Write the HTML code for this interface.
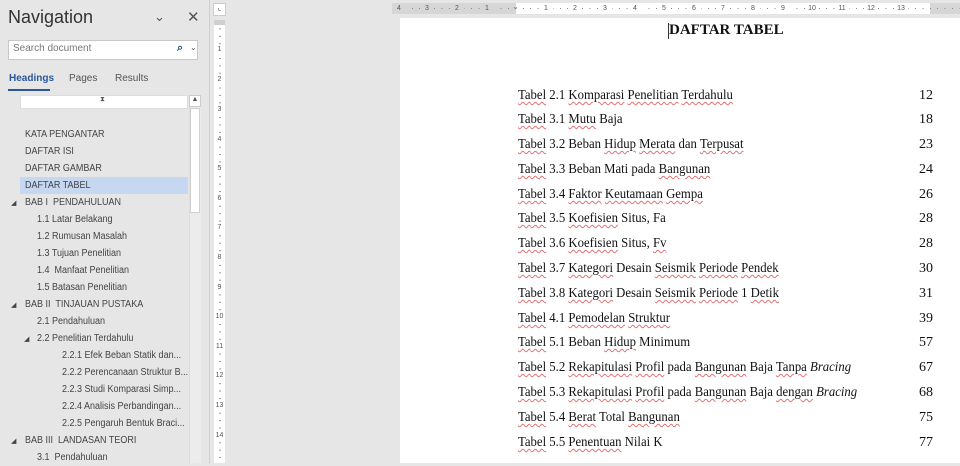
<!DOCTYPE html>
<html><head><meta charset="utf-8"><style>
*{margin:0;padding:0;box-sizing:border-box}
body{width:960px;height:463px;overflow:hidden;background:#e6e6e6;font-family:"Liberation Sans",sans-serif;position:relative}
.a{position:absolute}
.ni{position:absolute;font-size:10px;color:#444;white-space:nowrap;line-height:17px;transform:scaleX(0.9);transform-origin:left center}
.tri{position:absolute;font-size:7px;color:#444}
.row{position:absolute;left:518px;font-family:"Liberation Serif",serif;font-size:14px;color:#111;white-space:nowrap;line-height:18px;transform:scaleX(0.91);transform-origin:left center}
.pg{position:absolute;left:904px;width:29px;text-align:right;font-family:"Liberation Serif",serif;font-size:14px;color:#111;line-height:18px}
u{text-decoration:underline wavy #e07070;text-decoration-thickness:1px;text-underline-offset:2px}
.rn{position:absolute;top:3px;font-size:7px;color:#555;line-height:11px;width:14px;margin-left:-7px;text-align:center}
.vn{position:absolute;left:214px;width:11px;font-size:7px;color:#555;text-align:center;line-height:10px;margin-top:-5px}
</style></head><body>
<div class="a" style="left:8px;top:7px;font-size:18px;color:#333">Navigation</div>
<div class="a" style="left:154px;top:9px;font-size:13px;color:#555">&#8964;</div>
<div class="a" style="left:187px;top:8px;font-size:15px;color:#555">✕</div>
<div class="a" style="left:8px;top:40px;width:190px;height:20px;background:#fff;border:1px solid #c8c8c8"></div>
<div class="a" style="left:13px;top:43px;font-size:10px;color:#777">Search document</div>
<div class="a" style="left:177px;top:42px;font-size:11px;color:#2b4f8c;font-weight:bold">⌕</div>
<div class="a" style="left:190px;top:43px;font-size:8px;color:#555">⌄</div>
<div class="a" style="left:9px;top:73px;font-size:10px;color:#2b579a;font-weight:bold">Headings</div>
<div class="a" style="left:8px;top:89px;width:42px;height:2px;background:#2b579a"></div>
<div class="a" style="left:69px;top:73px;font-size:10px;color:#555">Pages</div>
<div class="a" style="left:115px;top:73px;font-size:10px;color:#555">Results</div>
<div class="a" style="left:20px;top:95px;width:168px;height:14px;background:#fff;border:1px solid #ddd"></div>
<div class="a" style="left:100px;top:96px;font-size:7px;color:#555">⧗</div>
<div class="a" style="left:189px;top:95px;width:12px;height:368px;background:#ececec;border-left:1px solid #ddd"></div>
<div class="a" style="left:189px;top:95px;width:12px;height:12px;background:#fff;border:1px solid #ccc;font-size:7px;text-align:center;color:#555">▲</div>
<div class="a" style="left:190px;top:108px;width:10px;height:105px;background:#fff;border:1px solid #d0d0d0"></div>
<div class="a" style="left:20px;top:177px;width:168px;height:17px;background:#c5d7f1"></div>
<div class="ni" style="left:25px;top:126px">KATA PENGANTAR</div>
<div class="ni" style="left:25px;top:143px">DAFTAR ISI</div>
<div class="ni" style="left:25px;top:160px">DAFTAR GAMBAR</div>
<div class="ni" style="left:25px;top:177px">DAFTAR TABEL</div>
<div class="tri" style="left:11px;top:199px">◢</div><div class="ni" style="left:25px;top:194px">BAB I&nbsp; PENDAHULUAN</div>
<div class="ni" style="left:37px;top:211px">1.1 Latar Belakang</div>
<div class="ni" style="left:37px;top:228px">1.2 Rumusan Masalah</div>
<div class="ni" style="left:37px;top:245px">1.3 Tujuan Penelitian</div>
<div class="ni" style="left:37px;top:262px">1.4&nbsp; Manfaat Penelitian</div>
<div class="ni" style="left:37px;top:279px">1.5 Batasan Penelitian</div>
<div class="tri" style="left:11px;top:301px">◢</div><div class="ni" style="left:25px;top:296px">BAB II&nbsp; TINJAUAN PUSTAKA</div>
<div class="ni" style="left:37px;top:313px">2.1 Pendahuluan</div>
<div class="tri" style="left:24px;top:335px">◢</div><div class="ni" style="left:37px;top:330px">2.2 Penelitian Terdahulu</div>
<div class="ni" style="left:62px;top:347px">2.2.1 Efek Beban Statik dan...</div>
<div class="ni" style="left:62px;top:364px">2.2.2 Perencanaan Struktur B...</div>
<div class="ni" style="left:62px;top:381px">2.2.3 Studi Komparasi Simp...</div>
<div class="ni" style="left:62px;top:398px">2.2.4 Analisis Perbandingan...</div>
<div class="ni" style="left:62px;top:415px">2.2.5 Pengaruh Bentuk Braci...</div>
<div class="tri" style="left:11px;top:437px">◢</div><div class="ni" style="left:25px;top:432px">BAB III&nbsp; LANDASAN TEORI</div>
<div class="ni" style="left:37px;top:449px">3.1&nbsp; Pendahuluan</div>
<div class="a" style="left:209px;top:0;width:1px;height:463px;background:#cfcfcf"></div>
<div class="a" style="left:213px;top:3px;width:13px;height:13px;background:#fff;border:1px solid #ccc;font-size:7px;text-align:center;color:#333">⌞</div>
<div class="a" style="left:214px;top:20px;width:11px;height:443px;background:#fff repeating-linear-gradient(to bottom,transparent 0 6.4px,#999 6.4px 7.4px,transparent 7.4px 7.4px) ;background-size:2px 7.4px;background-repeat:repeat-y;background-position:5px 2px"></div>
<div class="a" style="left:214px;top:20px;width:11px;height:5px;background:#cfcfcf"></div>
<div class="vn" style="top:50px;background:#fff">1</div><div class="vn" style="top:80px;background:#fff">2</div><div class="vn" style="top:110px;background:#fff">3</div><div class="vn" style="top:140px;background:#fff">4</div><div class="vn" style="top:169px;background:#fff">5</div><div class="vn" style="top:199px;background:#fff">6</div><div class="vn" style="top:228px;background:#fff">7</div><div class="vn" style="top:258px;background:#fff">8</div><div class="vn" style="top:288px;background:#fff">9</div><div class="vn" style="top:317px;background:#fff">10</div><div class="vn" style="top:347px;background:#fff">11</div><div class="vn" style="top:376px;background:#fff">12</div><div class="vn" style="top:406px;background:#fff">13</div><div class="vn" style="top:436px;background:#fff">14</div>
<div class="a" style="left:397px;top:3px;width:563px;height:11px;background:#fff"></div>
<div class="a" style="left:397px;top:3px;width:119px;height:11px;background:#d6d6d6"></div>
<div class="a" style="left:930px;top:3px;width:30px;height:11px;background:#d6d6d6"></div>
<div class="a" style="left:397px;top:8px;width:563px;height:1px;background:repeating-linear-gradient(to right,#888 0 1px,transparent 1px 7.4px)"></div>
<div class="rn" style="left:399px;background:#d6d6d6">4</div><div class="rn" style="left:427px;background:#d6d6d6">3</div><div class="rn" style="left:457px;background:#d6d6d6">2</div><div class="rn" style="left:487px;background:#d6d6d6">1</div>
<div class="rn" style="left:546px;background:#fff">1</div><div class="rn" style="left:575px;background:#fff">2</div><div class="rn" style="left:605px;background:#fff">3</div><div class="rn" style="left:635px;background:#fff">4</div><div class="rn" style="left:664px;background:#fff">5</div><div class="rn" style="left:694px;background:#fff">6</div><div class="rn" style="left:723px;background:#fff">7</div><div class="rn" style="left:753px;background:#fff">8</div><div class="rn" style="left:783px;background:#fff">9</div><div class="rn" style="left:812px;background:#fff">10</div><div class="rn" style="left:842px;background:#fff">11</div><div class="rn" style="left:871px;background:#fff">12</div><div class="rn" style="left:901px;background:#fff">13</div>
<div class="a" style="left:512px;top:2px;font-size:8px;color:#777">⌄</div>
<div class="a" style="left:400px;top:18px;width:560px;height:445px;background:#fff"></div>
<div class="a" style="left:668px;top:23px;width:1px;height:16px;background:#333"></div>
<div class="a" style="left:669px;top:22px;font-family:'Liberation Serif',serif;font-weight:bold;font-size:15px;color:#111">DAFTAR TABEL</div>
<div class="row" style="top:87px"><u>Tabel</u> 2.1 <u>Komparasi</u> <u>Penelitian</u> <u>Terdahulu</u></div><div class="pg" style="top:87px">12</div>
<div class="row" style="top:111px"><u>Tabel</u> 3.1 <u>Mutu</u> Baja</div><div class="pg" style="top:111px">18</div>
<div class="row" style="top:136px"><u>Tabel</u> 3.2 Beban <u>Hidup</u> <u>Merata</u> dan <u>Terpusat</u></div><div class="pg" style="top:136px">23</div>
<div class="row" style="top:161px"><u>Tabel</u> 3.3 Beban Mati pada <u>Bangunan</u></div><div class="pg" style="top:161px">24</div>
<div class="row" style="top:186px"><u>Tabel</u> 3.4 <u>Faktor</u> <u>Keutamaan</u> <u>Gempa</u></div><div class="pg" style="top:186px">26</div>
<div class="row" style="top:210px"><u>Tabel</u> 3.5 <u>Koefisien</u> Situs, Fa</div><div class="pg" style="top:210px">28</div>
<div class="row" style="top:235px"><u>Tabel</u> 3.6 <u>Koefisien</u> Situs, <u>Fv</u></div><div class="pg" style="top:235px">28</div>
<div class="row" style="top:260px"><u>Tabel</u> 3.7 <u>Kategori</u> Desain <u>Seismik</u> <u>Periode</u> <u>Pendek</u></div><div class="pg" style="top:260px">30</div>
<div class="row" style="top:285px"><u>Tabel</u> 3.8 <u>Kategori</u> Desain <u>Seismik</u> <u>Periode</u> 1 <u>Detik</u></div><div class="pg" style="top:285px">31</div>
<div class="row" style="top:310px"><u>Tabel</u> 4.1 <u>Pemodelan</u> <u>Struktur</u></div><div class="pg" style="top:310px">39</div>
<div class="row" style="top:334px"><u>Tabel</u> 5.1 Beban <u>Hidup</u> Minimum</div><div class="pg" style="top:334px">57</div>
<div class="row" style="top:359px"><u>Tabel</u> 5.2 <u>Rekapitulasi</u> <u>Profil</u> pada <u>Bangunan</u> Baja <u>Tanpa</u> <i>Bracing</i></div><div class="pg" style="top:359px">67</div>
<div class="row" style="top:384px"><u>Tabel</u> 5.3 <u>Rekapitulasi</u> <u>Profil</u> pada <u>Bangunan</u> Baja <u>dengan</u> <i>Bracing</i></div><div class="pg" style="top:384px">68</div>
<div class="row" style="top:409px"><u>Tabel</u> 5.4 <u>Berat</u> Total <u>Bangunan</u></div><div class="pg" style="top:409px">75</div>
<div class="row" style="top:434px"><u>Tabel</u> 5.5 <u>Penentuan</u> Nilai K</div><div class="pg" style="top:434px">77</div>
</body></html>
